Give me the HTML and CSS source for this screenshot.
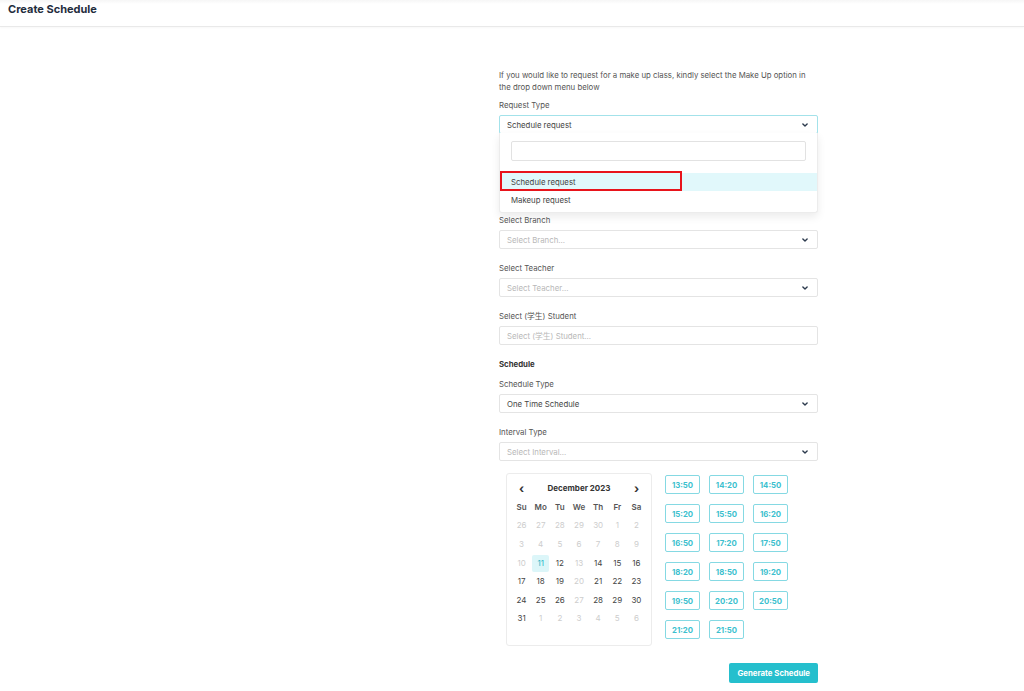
FILE: index.html
```html
<!DOCTYPE html>
<html lang="en">
<head>
    <meta charset="UTF-8">
    <meta name="viewport" content="width=device-width, initial-scale=1.0">
    <title>Create Schedule</title>
    <link rel="stylesheet" href="styles.css">
</head>
<body>

    <div class="topbar">
        <h1>Create Schedule</h1>
    </div>

    <div class="page">
        <div class="form">
            <p class="intro">If you would like to request for a make up class, kindly select the Make Up option in<br>the drop down menu below</p>

            <!-- Request type (open) -->
            <div class="field open">
                <label>Request Type</label>
                <div class="select focus">
                    <span>Schedule request</span>
                    <svg class="chev" viewBox="0 0 8 5"><path d="M1.2 1.2l2.8 2.6 2.8-2.6"/></svg>
                </div>
                <div class="dropdown">
                    <div class="search"></div>
                    <ul class="options">
                        <li class="active">Schedule request</li>
                        <li>Makeup request</li>
                        <div class="mark"></div>
                    </ul>
                </div>
            </div>

            <div class="field">
                <label>Select Branch</label>
                <div class="select">
                    <span class="ph">Select Branch...</span>
                    <svg class="chev" viewBox="0 0 8 5"><path d="M1.2 1.2l2.8 2.6 2.8-2.6"/></svg>
                </div>
            </div>

            <div class="field">
                <label>Select Teacher</label>
                <div class="select">
                    <span class="ph">Select Teacher...</span>
                    <svg class="chev" viewBox="0 0 8 5"><path d="M1.2 1.2l2.8 2.6 2.8-2.6"/></svg>
                </div>
            </div>

            <div class="field">
                <label>Select (学生) Student</label>
                <div class="select">
                    <span class="ph">Select (学生) Student...</span>
                </div>
            </div>

            <h3 class="heading">Schedule</h3>

            <div class="field">
                <label>Schedule Type</label>
                <div class="select">
                    <span>One Time Schedule</span>
                    <svg class="chev" viewBox="0 0 8 5"><path d="M1.2 1.2l2.8 2.6 2.8-2.6"/></svg>
                </div>
            </div>

            <div class="field last">
                <label>Interval Type</label>
                <div class="select">
                    <span class="ph">Select Interval...</span>
                    <svg class="chev" viewBox="0 0 8 5"><path d="M1.2 1.2l2.8 2.6 2.8-2.6"/></svg>
                </div>
            </div>

            <div class="picker">
                <div class="calendar">
                    <div class="cal-head">
                        <span class="arrow">&#8249;</span>
                        <span class="month">December 2023</span>
                        <span class="arrow">&#8250;</span>
                    </div>
                    <div class="days" id="days">
                        <span class="dn">Su</span><span class="dn">Mo</span><span class="dn">Tu</span><span class="dn">We</span><span class="dn">Th</span><span class="dn">Fr</span><span class="dn">Sa</span>
                    </div>
                </div>

                <div class="times" id="times"></div>
            </div>

            <div class="actions">
                <button class="btn">Generate Schedule</button>
            </div>
        </div>
    </div>

    <script>
        function buildCalendar() {
            let days = document.getElementById("days");
            let cells = [];
            [26, 27, 28, 29, 30].forEach(d => cells.push({ d: d, off: true }));
            for (let d = 1; d <= 31; d++) {
                let off = d <= 10 || d == 13 || d == 20 || d == 27;
                cells.push({ d: d, off: off, today: d == 11 });
            }
            for (let d = 1; d <= 6; d++) cells.push({ d: d, off: true });

            let html = "";
            cells.forEach(c => {
                let cls = "day";
                if (c.off) cls += " off";
                if (c.today) cls += " today";
                html += `<span class="${cls}"><i>${c.d}</i></span>`;
            });
            days.innerHTML += html;
        }

        function buildTimes() {
            let slots = ["13:50", "14:20", "14:50", "15:20", "15:50", "16:20", "16:50", "17:20",
                "17:50", "18:20", "18:50", "19:20", "19:50", "20:20", "20:50", "21:20", "21:50"];
            document.getElementById("times").innerHTML =
                slots.map(t => `<span class="slot">${t}</span>`).join("");
        }

        buildCalendar();
        buildTimes();
    </script>

</body>
</html>
```

FILE: styles.css
```css
body {
    font-family: 'Inter', 'Noto Sans CJK SC', sans-serif;
    margin: 0;
    padding: 0;
    background: #fff;
    color: #555;
}
.topbar {
    height: 26px;
    border-bottom: 1px solid #e9e9e9;
    box-shadow: 0 1px 2px rgba(0, 0, 0, 0.03);
    background: linear-gradient(#f6f6f6, #fff 4px);
}
.topbar h1 {
    margin: 0;
    padding: 2px 0 0 8px;
    font-size: 11px;
    line-height: 14px;
    font-weight: 700;
    color: #1f2d3d;
}
.page {
    padding: 42px 0 20px 499px;
}
.form {
    width: 319px;
}
.intro {
    margin: 0 0 6px;
    font-size: 7.8px;
    line-height: 12px;
    color: #555;
}
.field {
    margin-bottom: 13px;
}
.field.open {
    margin-bottom: 1px;
}
.field.last {
    margin-bottom: 12px;
}
.field label {
    display: block;
    font-size: 7.8px;
    line-height: 12px;
    margin-bottom: 4px;
    color: #555;
}
.select {
    height: 19px;
    box-sizing: border-box;
    border: 1px solid #e4e4e4;
    border-radius: 2px;
    display: flex;
    align-items: center;
    justify-content: space-between;
    padding: 0 9px 0 7px;
    font-size: 7.8px;
    color: #444;
}
.select.focus {
    border-color: #a3e2ea;
    background: #fff;
}
.select .ph {
    color: #b8b8b8;
}
.chev {
    width: 6px;
    height: 4px;
    fill: none;
    stroke: #2c3a4d;
    stroke-width: 1.9;
    stroke-linecap: round;
    stroke-linejoin: round;
}
.dropdown {
    margin-top: -1px;
    height: 80px;
    box-sizing: border-box;
    background: #fff;
    border: 1px solid #ececec;
    border-top: none;
    border-radius: 0 0 3px 3px;
    box-shadow: 0 4px 8px rgba(0, 0, 0, 0.08);
    padding-top: 8px;
}
.search {
    height: 20px;
    box-sizing: border-box;
    margin: 0 11px;
    border: 1px solid #e2e2e2;
    border-radius: 2px;
}
.options {
    list-style: none;
    margin: 12px 0 0;
    padding: 0;
    position: relative;
}
.options li {
    height: 18px;
    line-height: 18px;
    padding-left: 11px;
    font-size: 7.8px;
    color: #444;
}
.options li.active {
    background: #e1f8fb;
}
.mark {
    position: absolute;
    left: 0;
    top: -2px;
    width: 182px;
    height: 20px;
    box-sizing: border-box;
    border: 2px solid #e8141b;
}
.heading {
    margin: 0 0 8px;
    font-size: 7.8px;
    line-height: 12px;
    font-weight: 700;
    color: #333;
}
.picker {
    display: flex;
    gap: 13px;
    padding-left: 7px;
}
.calendar {
    width: 146px;
    box-sizing: border-box;
    border: 1px solid #ececec;
    border-radius: 3px;
    padding: 6px 5px 17px;
}
.cal-head {
    height: 16px;
    display: flex;
    align-items: center;
    justify-content: space-between;
    margin-bottom: 2px;
}
.arrow {
    width: 19px;
    text-align: center;
    font-size: 12px;
    font-weight: 700;
    color: #333;
}
.month {
    font-size: 8px;
    font-weight: 700;
    color: #333;
}
.days {
    display: grid;
    grid-template-columns: repeat(7, 1fr);
    grid-auto-rows: 18.6px;
}
.dn,
.day {
    display: flex;
    align-items: center;
    justify-content: center;
    font-size: 8px;
}
.dn {
    font-weight: 600;
    color: #555;
}
.day {
    color: #444;
}
.day i {
    font-style: normal;
    width: 17px;
    height: 17px;
    line-height: 17px;
    text-align: center;
    border-radius: 2px;
}
.day.off {
    color: #cdcdcd;
}
.day.today i {
    background: #dcf6f9;
    color: #2bb7c6;
}
.times {
    display: grid;
    grid-template-columns: repeat(3, 35px);
    grid-auto-rows: 19px;
    column-gap: 9px;
    row-gap: 10px;
    margin-top: 2px;
    align-content: start;
}
.slot {
    box-sizing: border-box;
    border: 1.5px solid #85d9e3;
    border-radius: 2px;
    display: flex;
    align-items: center;
    justify-content: center;
    font-size: 7.8px;
    font-weight: 700;
    color: #3cbfce;
}
.actions {
    display: flex;
    justify-content: flex-end;
    margin-top: 17px;
}
.btn {
    background: #25bfcd;
    color: white;
    font-family: inherit;
    font-size: 7.8px;
    font-weight: 700;
    height: 20px;
    padding: 0 8px;
    border: none;
    border-radius: 2px;
    cursor: pointer;
}
```
